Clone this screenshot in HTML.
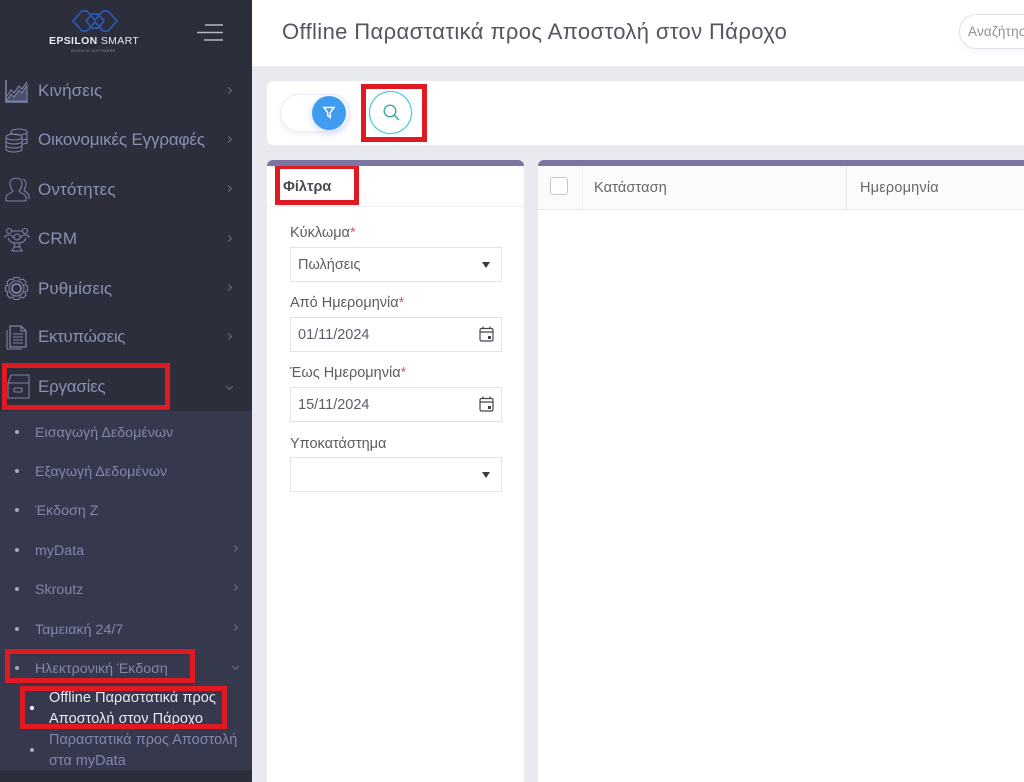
<!DOCTYPE html>
<html><head><meta charset="utf-8">
<style>
*{box-sizing:border-box}
html,body{margin:0;padding:0;width:1024px;height:782px;overflow:hidden;background:#e9eaf0;font-family:"Liberation Sans","Noto Sans CJK JP",sans-serif}
.a{position:absolute;white-space:nowrap}
#side{position:absolute;left:0;top:0;width:252px;height:782px;background:#2c2e3c}
#sub{position:absolute;left:0;top:411px;width:252px;height:359px;background:#36384e}
.m{font-size:17px;color:#8a91b4;left:38px;line-height:24px;letter-spacing:.15px}
.s{font-size:14.2px;color:#8288ac;left:35px;line-height:20px;letter-spacing:.05px}
.d{position:absolute;width:4px;height:4px;border-radius:50%;background:#a4a8c0}
.c{position:absolute;width:5px;height:5px;border-top:1.2px solid #6c718e;border-right:1.2px solid #6c718e;transform:rotate(45deg)}
.v{position:absolute;width:5px;height:5px;border-bottom:1.2px solid #6c718e;border-right:1.2px solid #6c718e;transform:rotate(45deg)}
.r{position:absolute;border:5px solid #e01a22;background:transparent}
.l{font-size:14.5px;color:#5f5a5e;left:290px;line-height:18px}
.l i{font-style:normal;color:#d9568a}
.f{position:absolute;left:290px;width:212px;height:35px;background:#fff;border:1px solid #e3e3e6}
.t{font-size:14.5px;color:#5c5e66;left:298px;line-height:18px}
.ar{position:absolute;left:482px;width:0;height:0;border-left:4.5px solid transparent;border-right:4.5px solid transparent;border-top:6px solid #3a3a40}
svg{position:absolute;overflow:visible}
.ic{fill:none;stroke:#7b82a6;stroke-width:1.1}
</style></head><body>

<div id="side"></div>
<div id="sub"></div>

<svg style="left:72px;top:9px" width="46" height="24" viewBox="0 0 46 24" fill="none" stroke="#2a57b8" stroke-width="1.7">
<path d="M1 12 L10 2 H15 L23 11 L31 2 H36 L45 12 L36 22 H31 L23 13 L15 22 H10 Z"/>
<path d="M14 12 L20 5 H26 L32 12 L26 19 H20 Z"/>
</svg>
<div class="a" style="left:49px;top:35px;font-size:10.500px;line-height:13px;color:#e8e9ee;letter-spacing:.35px"><b>EPSILON</b> SMART</div>
<div class="a" style="left:71px;top:48px;font-size:4px;line-height:5px;color:#8a8c99;letter-spacing:.3px">INVOICE SOFTWARE</div>
<svg style="left:197px;top:24px" width="27" height="17" fill="none" stroke="#b5b7c4" stroke-width="1.400"><path d="M8 1H26M0 8.500H26M7 16H26"/></svg>

<svg class="ic" style="left:4px;top:79px" width="25" height="25" viewBox="0 0 25 25"><path d="M2 1V23H24" stroke-width="1.600"/><path d="M3 21L7 15L10 18L15 11L18 14L23 6V22H3Z" fill="#4a4f6c"/><path d="M3 17L7 11L10 14L15 7L18 10L23 3"/></svg>
<svg class="ic" style="left:5px;top:128px" width="24" height="25" viewBox="0 0 24 25"><ellipse cx="14" cy="4" rx="8" ry="3"/><path d="M22 4V16M6 5V7"/><ellipse cx="9" cy="9" rx="8" ry="3"/><path d="M1 9V21C1 23 5 24 9 24S17 23 17 21V9M1 13C1 15 5 16 9 16S17 15 17 13M1 17C1 19 5 20 9 20S17 19 17 17M17 12C20 12 22 11 22 10M17 16C20 16 22 15 22 14"/></svg>
<svg class="ic" style="left:4px;top:177px" width="26" height="25" viewBox="0 0 26 25"><path d="M2 24V20C2 17 8 16 9 14C7 12 6 9 6 6C6 3 9 1 12 1C15 1 18 3 18 6C18 9 17 12 15 14C16 16 22 17 22 20V24Z"/><path d="M19 2C21 3 22 5 22 7C22 9 21 11 20 13C21 15 25 16 25 19V22"/></svg>
<svg class="ic" style="left:4px;top:226px" width="26" height="26" viewBox="0 0 26 26"><circle cx="5" cy="5" r="2.500"/><circle cx="21" cy="5" r="2.500"/><path d="M8 5H18M1 12C1 9 3 9 5 9S9 10 9 12M17 12C17 10 19 9 21 9S25 9 25 12M4 12C6 17 9 17 13 17S20 17 22 12"/><circle cx="13" cy="11" r="3"/><path d="M10 17L11 21H15L16 17M8 25H18L16 21H10Z"/></svg>
<svg class="ic" style="left:4px;top:276px" width="25" height="25" viewBox="0 0 25 25"><circle cx="12.500" cy="12.500" r="7.500"/><circle cx="12.500" cy="12.500" r="4.500" stroke-width="1.800"/><path d="M10 1.500H15L16 4L19 3L22 6L21 9L23.500 10V15L21 16L22 19L19 22L16 21L15 23.500H10L9 21L6 22L3 19L4 16L1.500 15V10L4 9L3 6L6 3L9 4Z"/></svg>
<svg class="ic" style="left:6px;top:325px" width="22" height="25" viewBox="0 0 22 25"><path d="M4 1H15L20 6V22H4Z" stroke-width="1.300"/><path d="M1 5V24H16M15 1V6H20M7 9H17M7 12H17M7 15H17M7 18H17"/></svg>
<svg class="ic" style="left:7px;top:374px" width="23" height="25" viewBox="0 0 23 25"><path d="M4 1H22V24H1V9Z M1 9H22"/><rect x="7" y="14" width="8" height="4" rx="1"/></svg>

<div class="a m" style="top:79px">Κινήσεις</div>
<div class="a m" style="top:128px;letter-spacing:-.15px">Οικονομικές Εγγραφές</div>
<div class="a m" style="top:178px">Οντότητες</div>
<div class="a m" style="top:227px">CRM</div>
<div class="a m" style="top:277px;letter-spacing:.05px">Ρυθμίσεις</div>
<div class="a m" style="top:325px;letter-spacing:-.35px">Εκτυπώσεις</div>
<div class="a m" style="top:375px;letter-spacing:-.25px">Εργασίες</div>

<div class="c" style="left:226px;top:88px"></div>
<div class="c" style="left:226px;top:137px"></div>
<div class="c" style="left:226px;top:186px"></div>
<div class="c" style="left:226px;top:236px"></div>
<div class="c" style="left:226px;top:285px"></div>
<div class="c" style="left:226px;top:334px"></div>
<div class="v" style="left:227px;top:384px"></div>

<div class="d" style="left:15px;top:430px"></div><div class="a s" style="top:423px">Εισαγωγή Δεδομένων</div>
<div class="d" style="left:15px;top:469px"></div><div class="a s" style="top:462px">Εξαγωγή Δεδομένων</div>
<div class="d" style="left:15px;top:508px"></div><div class="a s" style="top:501px">Έκδοση Ζ</div>
<div class="d" style="left:15px;top:548px"></div><div class="a s" style="top:541px">myData</div>
<div class="d" style="left:15px;top:587px"></div><div class="a s" style="top:580px">Skroutz</div>
<div class="d" style="left:15px;top:627px"></div><div class="a s" style="top:620px">Ταμειακή 24/7</div>
<div class="d" style="left:15px;top:666px"></div><div class="a s" style="top:659px">Ηλεκτρονική Έκδοση</div>
<div class="c" style="left:232px;top:546px"></div>
<div class="c" style="left:232px;top:585px"></div>
<div class="c" style="left:232px;top:625px"></div>
<div class="v" style="left:233px;top:664px"></div>

<div class="d" style="left:30px;top:706px;background:#fff"></div>
<div class="a s" style="left:49px;top:688px;color:#e8e9f2;line-height:21px;font-size:14.500px">Offline Παραστατικά προς<br>Αποστολή στον Πάροχο</div>
<div class="d" style="left:30px;top:748px"></div>
<div class="a s" style="left:49px;top:730px;line-height:21px;font-size:14.400px">Παραστατικά προς Αποστολή<br>στα myData</div>

<div class="a" style="left:252px;top:0;width:772px;height:66px;background:#fff"></div>
<div class="a" style="left:282px;top:17px;font-size:22px;line-height:30px;color:#54565e;letter-spacing:.37px">Offline Παραστατικά προς Αποστολή στον Πάροχο</div>
<div class="a" style="left:959px;top:14px;width:90px;height:35px;border:1px solid #e2e2e8;border-radius:18px;background:#fff;box-shadow:0 2px 6px rgba(120,120,160,.08)"></div>
<div class="a" style="left:968px;top:24px;font-size:13.500px;line-height:16px;color:#8f9098;letter-spacing:.2px">Αναζήτηση</div>

<div class="a" style="left:267px;top:81px;width:757px;height:64px;background:#fff;border-radius:6px 0 0 6px"></div>
<div class="a" style="left:280px;top:94px;width:70px;height:38px;border:1.500px solid #ececf2;border-radius:19px;background:#fff;box-shadow:0 2px 6px rgba(120,120,200,.12)"></div>
<div class="a" style="left:312px;top:96px;width:34px;height:34px;border-radius:50%;background:#3f9cf0;box-shadow:0 2px 8px rgba(63,120,240,.25)"></div>
<svg style="left:323px;top:106px" width="12" height="13" viewBox="0 0 12 13" fill="none" stroke="#fff" stroke-width="1.500"><path d="M1 1.500H11L7.300 6.500V11.500L4.700 9.500V6.500Z"/></svg>
<div class="a" style="left:369px;top:91px;width:43px;height:43px;border:1px solid #3cc4c8;border-radius:50%;background:#fff;box-shadow:0 0 5px rgba(60,200,220,.25)"></div>
<svg style="left:382px;top:103px" width="19" height="19" viewBox="0 0 19 19" fill="none" stroke="#3fa6ae" stroke-width="1.400"><circle cx="8" cy="8" r="5.800"/><path d="M12.300 12.300L17 17"/></svg>

<div class="a" style="left:267px;top:160px;width:257px;height:622px;background:#fff;border-top:6px solid #7a75a2;border-radius:6px 6px 0 0"></div>
<div class="a" style="left:267px;top:206px;width:257px;height:1px;background:#eeeef1"></div>
<div class="a" style="left:283px;top:178px;font-size:14.500px;line-height:18px;font-weight:bold;color:#4a4a50">Φίλτρα</div>

<div class="a l" style="top:224px">Κύκλωμα<i>*</i></div>
<div class="f" style="top:247px"></div>
<div class="a t" style="top:256px">Πωλήσεις</div>
<div class="ar" style="top:262px"></div>

<div class="a l" style="top:294px">Από Ημερομηνία<i>*</i></div>
<div class="f" style="top:317px"></div>
<div class="a t" style="top:326px">01/11/2024</div>
<svg style="left:479px;top:326px" width="15" height="16" viewBox="0 0 15 16" fill="none" stroke="#44464c" stroke-width="1.200"><rect x="1" y="2.500" width="13" height="12.500" rx="1.500"/><path d="M1 6H14M4 .5V3M11 .5V3"/><rect x="9" y="10" width="3" height="3" fill="#44464c" stroke="none"/></svg>

<div class="a l" style="top:364px">Έως Ημερομηνία<i>*</i></div>
<div class="f" style="top:387px"></div>
<div class="a t" style="top:396px">15/11/2024</div>
<svg style="left:479px;top:396px" width="15" height="16" viewBox="0 0 15 16" fill="none" stroke="#44464c" stroke-width="1.200"><rect x="1" y="2.500" width="13" height="12.500" rx="1.500"/><path d="M1 6H14M4 .5V3M11 .5V3"/><rect x="9" y="10" width="3" height="3" fill="#44464c" stroke="none"/></svg>

<div class="a l" style="top:435px">Υποκατάστημα</div>
<div class="f" style="top:457px"></div>
<div class="ar" style="top:472px"></div>

<div class="a" style="left:538px;top:160px;width:486px;height:622px;background:#fff;border-top:6px solid #7a75a2;border-radius:6px 0 0 0"></div>
<div class="a" style="left:538px;top:166px;width:486px;height:44px;background:#fbfbfb;border-bottom:1px solid #e8e8ea"></div>
<div class="a" style="left:582px;top:166px;width:1px;height:43px;background:#eeeeef"></div>
<div class="a" style="left:846px;top:166px;width:1px;height:43px;background:#e8e8ea"></div>
<div class="a" style="left:550px;top:177px;width:18px;height:18px;border:1px solid #c4c4ca;border-radius:3px;background:#fff"></div>
<div class="a" style="left:594px;top:179px;font-size:14.500px;line-height:18px;color:#66666c;letter-spacing:.15px">Κατάσταση</div>
<div class="a" style="left:860px;top:179px;font-size:14.500px;line-height:18px;color:#66666c;letter-spacing:.2px">Ημερομηνία</div>

<div class="r" style="left:2px;top:363px;width:168px;height:47px"></div>
<div class="r" style="left:5px;top:649px;width:190px;height:34px"></div>
<div class="r" style="left:20px;top:686px;width:207px;height:43px"></div>
<div class="r" style="left:361px;top:84px;width:66px;height:58px"></div>
<div class="r" style="left:275px;top:166px;width:84px;height:39px;border-top-width:3px;border-width:3px 5px 5px 5px"></div>

</body></html>
